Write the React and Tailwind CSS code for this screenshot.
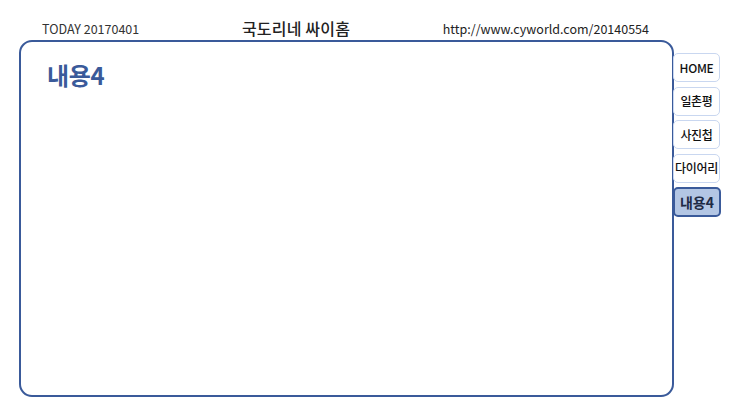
import React from 'react';

const tabs = ['HOME', '일촌평', '사진첩', '다이어리', '내용4'];

const App = () => {
    const active = '내용4';

    return (
        <div
            className="w-[740px] h-[416px] bg-white text-[#222]"
            style={{ fontFamily: '"Noto Sans CJK KR", "Noto Sans", sans-serif' }}
        >
            <div className="flex w-[654px] ml-[20px] pt-[20px] items-center justify-between pl-[22px] pr-[25px] h-[40px] pb-[1px]">
                <span className="text-[12.5px] leading-none text-[#333]">TODAY 20170401</span>
                <span className="text-[16px] leading-none font-medium text-[#222] -mt-[3px] ml-[10px] tracking-[0.2px]">국도리네 싸이홈</span>
                <span className="text-[12.5px] leading-none text-[#222]">http://www.cyworld.com/20140554</span>
            </div>
            <div className="flex items-start ml-[19px]">
                <div className="w-[655px] h-[357px] border-2 border-[#3a5a9a] rounded-[13px] px-[26px] pt-[21px]">
                    <h1 className="text-[24px] font-bold leading-none text-[#3a5a9a] tracking-[-0.3px]">내용4</h1>
                </div>
                <div className="flex flex-col gap-[4.5px] mt-[13px] -ml-[1px]">
                    {tabs.map((t) =>
                        t === active ? (
                            <div
                                key={t}
                                className="w-[48px] h-[30px] flex items-center justify-center rounded-[5px] border-2 border-[#3a5a9a] bg-[#b3c6e4] text-[14px] font-bold text-[#1e2a44]"
                            >
                                {t}
                            </div>
                        ) : (
                            <div
                                key={t}
                                className="w-[47px] h-[29px] flex items-center justify-center rounded-[5px] border border-[#c9d7f0] bg-white text-[12px] font-medium text-[#111] tracking-[-0.3px]"
                            >
                                {t}
                            </div>
                        )
                    )}
                </div>
            </div>
        </div>
    );
};

export default App;
